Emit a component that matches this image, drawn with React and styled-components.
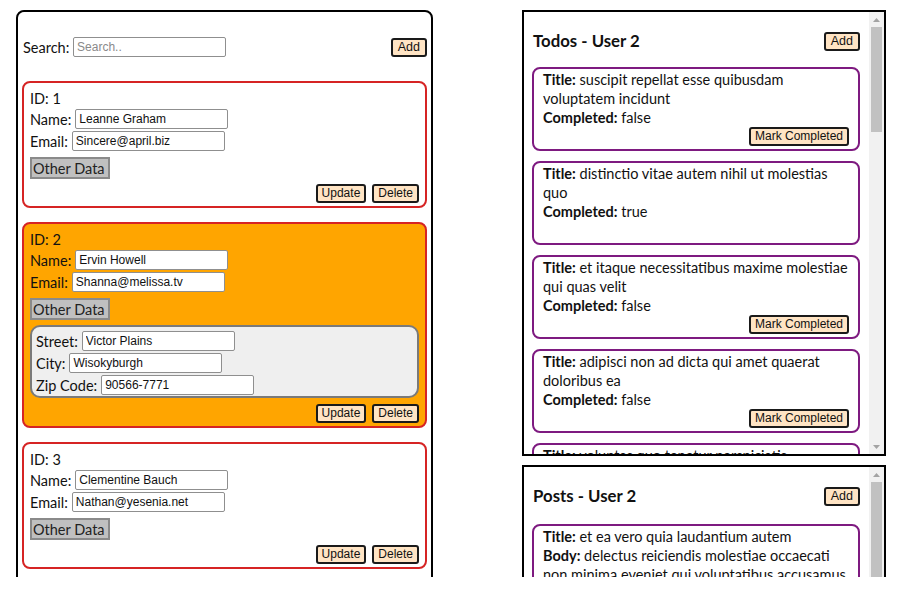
import React from 'react';
import styled, { createGlobalStyle } from 'styled-components';

const users = [
	{ id: 1, name: 'Leanne Graham', email: 'Sincere@april.biz', street: 'Kulas Light', city: 'Gwenborough', zip: '92998-3874' },
	{ id: 2, name: 'Ervin Howell', email: 'Shanna@melissa.tv', street: 'Victor Plains', city: 'Wisokyburgh', zip: '90566-7771' },
	{ id: 3, name: 'Clementine Bauch', email: 'Nathan@yesenia.net', street: 'Douglas Extension', city: 'McKenziehaven', zip: '59590-4157' },
];

const todos = [
	{ id: 21, title: 'suscipit repellat esse quibusdam voluptatem incidunt', completed: false },
	{ id: 22, title: 'distinctio vitae autem nihil ut molestias quo', completed: true },
	{ id: 23, title: 'et itaque necessitatibus maxime molestiae qui quas velit', completed: false },
	{ id: 24, title: 'adipisci non ad dicta qui amet quaerat doloribus ea', completed: false },
	{ id: 25, title: 'voluptas quo tenetur perspiciatis explicabo natus', completed: true },
];

const posts = [
	{
		id: 11,
		title: 'et ea vero quia laudantium autem',
		body: 'delectus reiciendis molestiae occaecati non minima eveniet qui voluptatibus accusamus in eum beatae sit vel qui neque voluptates ut commodi qui incidunt ut animi commodi',
	},
];

const ACTIVE_USER = 2;

const GlobalStyle = createGlobalStyle`
	* {
		box-sizing: border-box;
	}
	body {
		margin: 0;
		background: #fff;
		color: #111;
		font-family: Lato, 'Noto Sans', sans-serif;
	}
`;

const Page = styled.div`
	display: flex;
	align-items: flex-start;
	gap: 89px;
	height: 577px;
	overflow: hidden;
	padding: 10px 0 0 16px;
`;

const UsersPanel = styled.div`
	width: 417px;
	flex-shrink: 0;
	border: 2px solid #000;
	border-radius: 8px;
	padding: 24px 4px 20px;
`;

const SearchBar = styled.div`
	display: flex;
	justify-content: space-between;
	align-items: center;
	height: 22px;
	padding-left: 1px;
`;

const Label = styled.span`
	display: flex;
	align-items: center;
	font-size: 14.5px;
	white-space: pre;
`;

const TextInput = styled.input`
	width: 153px;
	height: 20px;
	margin-left: ${(p) => p.$gap ?? 4}px;
	padding: 1px 3px;
	border: 1px solid #8f8f8f;
	border-radius: 2px;
	background: #fff;
	font-family: 'Liberation Sans', Arial, sans-serif;
	font-size: 12px;
	color: #111;
	outline: none;
	&::placeholder {
		color: #8a8a8a;
	}
`;

const ActionButton = styled.button`
	height: 19px;
	padding: 0 ${(p) => (p.$wide ? 5 : 4)}px;
	border: 2px solid #1a1a1a;
	border-radius: 3px;
	background: #ffe4c4;
	font-family: 'Liberation Sans', Arial, sans-serif;
	font-size: ${(p) => (p.$wide ? 12.5 : 12)}px;
	line-height: 15px;
	color: #111;
	cursor: pointer;
	visibility: ${(p) => (p.$hidden ? 'hidden' : 'visible')};
`;

const UserList = styled.div`
	display: flex;
	flex-direction: column;
	gap: 14px;
	margin-top: 23px;
`;

const UserCard = styled.div`
	border: 2px solid #d62424;
	border-radius: 8px;
	padding: 6px 6px 3px;
	background: ${(p) => (p.$active ? '#ffa500' : '#fff')};
`;

const IdLine = styled.div`
	font-size: 14.5px;
	line-height: 19px;
`;

const FieldRow = styled.div`
	display: flex;
	align-items: center;
	height: 22px;
	font-size: 14.5px;
`;

const OtherDataButton = styled.button`
	display: block;
	height: 22px;
	margin-top: 5px;
	padding: 0 3px 0 1px;
	border: 2px solid #8a8a8a;
	background: #c0c0c0;
	font-family: Lato, 'Noto Sans', sans-serif;
	font-size: 14.5px;
	color: #222;
	cursor: pointer;
`;

const AddressBox = styled.div`
	margin-top: 5px;
	padding: 3px 4px 0;
	border: 2px solid #7a7a7a;
	border-radius: 10px;
	background: #efefef;
`;

const Actions = styled.div`
	display: flex;
	justify-content: flex-end;
	gap: 6px;
	margin-top: ${(p) => p.$gap ?? 5}px;
`;

const RightColumn = styled.div`
	width: 364px;
	flex-shrink: 0;
	display: flex;
	flex-direction: column;
	gap: 9px;
`;

const ListPanel = styled.div`
	display: flex;
	height: ${(p) => p.$height}px;
	flex-shrink: 0;
	border: 2px solid #000;
	overflow: hidden;
`;

const ListBody = styled.div`
	flex: 1;
	min-width: 0;
	overflow: hidden;
	padding: 17px 9px 0 8px;
`;

const ListHeader = styled.div`
	display: flex;
	justify-content: space-between;
	align-items: center;
	height: 24px;
	margin-bottom: ${(p) => p.$gap}px;
	padding-left: 1px;
`;

const ListTitle = styled.h3`
	margin: 0 0 2px;
	font-size: 16.8px;
	font-weight: 700;
`;

const ItemList = styled.div`
	display: flex;
	flex-direction: column;
	gap: 10px;
`;

const ItemCard = styled.div`
	border: 2px solid #7e1a80;
	border-radius: 8px;
	padding: 1px 9px 3px;
`;

const ItemText = styled.div`
	font-size: 14.5px;
	line-height: 19px;
	& b {
		font-weight: 700;
	}
`;

const ScrollTrack = styled.div`
	width: 15px;
	flex-shrink: 0;
	display: flex;
	flex-direction: column;
	background: #f1f1f1;
`;

const ScrollArrow = styled.div`
	height: 15px;
	flex-shrink: 0;
	display: flex;
	align-items: center;
	justify-content: center;
`;

const ScrollThumb = styled.div`
	height: ${(p) => p.$height}px;
	margin: 0 2px;
	flex-shrink: 0;
	background: #c1c1c1;
`;

const Spacer = styled.div`
	flex: 1;
`;

const Arrow = ({ down }) => (
	<svg width='7' height='4' viewBox='0 0 7 4'>
		<path d={down ? 'M0 0L3.5 4L7 0Z' : 'M0 4L3.5 0L7 4Z'} fill='#a3a3a3' />
	</svg>
);

const Scrollbar = ({ thumb }) => (
	<ScrollTrack>
		<ScrollArrow>
			<Arrow />
		</ScrollArrow>
		<ScrollThumb $height={thumb} />
		<Spacer />
		<ScrollArrow>
			<Arrow down />
		</ScrollArrow>
	</ScrollTrack>
);

const User = ({ user }) => {
	const active = user.id === ACTIVE_USER;
	return (
		<UserCard $active={active}>
			<IdLine>ID: {user.id}</IdLine>
			<FieldRow>
				Name: <TextInput defaultValue={user.name} />
			</FieldRow>
			<FieldRow>
				Email: <TextInput defaultValue={user.email} />
			</FieldRow>
			<OtherDataButton>Other Data</OtherDataButton>
			{active && (
				<AddressBox>
					<FieldRow>
						Street: <TextInput defaultValue={user.street} />
					</FieldRow>
					<FieldRow>
						City: <TextInput defaultValue={user.city} />
					</FieldRow>
					<FieldRow>
						Zip Code: <TextInput defaultValue={user.zip} />
					</FieldRow>
				</AddressBox>
			)}
			<Actions $gap={active ? 6 : 5}>
				<ActionButton>Update</ActionButton>
				<ActionButton>Delete</ActionButton>
			</Actions>
		</UserCard>
	);
};

export default function App() {
	return (
		<>
			<GlobalStyle />
			<Page>
				<UsersPanel>
					<SearchBar>
						<Label>
							Search: <TextInput $gap={0} placeholder='Search..' />
						</Label>
						<ActionButton $wide>Add</ActionButton>
					</SearchBar>
					<UserList>
						{users.map((u) => (
							<User key={u.id} user={u} />
						))}
					</UserList>
				</UsersPanel>

				<RightColumn>
					<ListPanel $height={446}>
						<ListBody>
							<ListHeader $gap={14}>
								<ListTitle>Todos - User {ACTIVE_USER}</ListTitle>
								<ActionButton $wide>Add</ActionButton>
							</ListHeader>
							<ItemList>
								{todos.map((t) => (
									<ItemCard key={t.id}>
										<ItemText>
											<b>Title:</b> {t.title}
										</ItemText>
										<ItemText>
											<b>Completed:</b> {String(t.completed)}
										</ItemText>
										<Actions $gap={0}>
											<ActionButton $hidden={t.completed}>Mark Completed</ActionButton>
										</Actions>
									</ItemCard>
								))}
							</ItemList>
						</ListBody>
						<Scrollbar thumb={105} />
					</ListPanel>

					<ListPanel $height={300}>
						<ListBody>
							<ListHeader $gap={16}>
								<ListTitle>Posts - User {ACTIVE_USER}</ListTitle>
								<ActionButton $wide>Add</ActionButton>
							</ListHeader>
							<ItemList>
								{posts.map((p) => (
									<ItemCard key={p.id}>
										<ItemText>
											<b>Title:</b> {p.title}
										</ItemText>
										<ItemText>
											<b>Body:</b> {p.body}
										</ItemText>
									</ItemCard>
								))}
							</ItemList>
						</ListBody>
						<Scrollbar thumb={200} />
					</ListPanel>
				</RightColumn>
			</Page>
		</>
	);
}
